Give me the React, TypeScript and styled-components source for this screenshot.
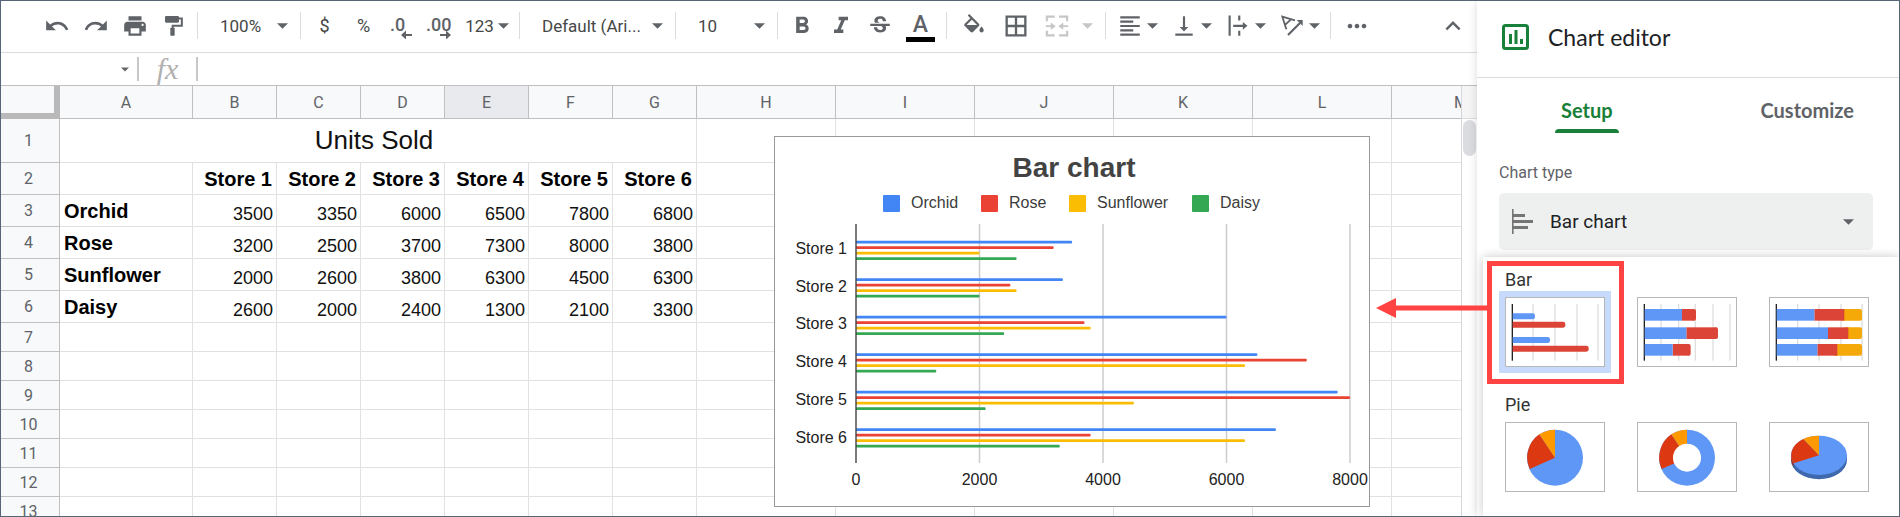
import React from 'react';
import styled, { createGlobalStyle, css } from 'styled-components';
import {
  MdUndo,
  MdRedo,
  MdPrint,
  MdFormatBold,
  MdFormatItalic,
  MdStrikethroughS,
  MdBorderAll,
  MdFormatAlignLeft,
  MdVerticalAlignBottom,
  MdMoreHoriz,
  MdKeyboardArrowUp,
} from 'react-icons/md';

const GlobalStyle = createGlobalStyle`
  *, *::before, *::after { box-sizing: border-box; }
  body { margin: 0; background: #fff; font-family: Roboto, sans-serif; color: #202124; }
  button, input, select { font: inherit; color: inherit; margin: 0; padding: 0; border: 0; background: none; outline: none; }
  button { cursor: pointer; }
  svg { display: block; flex: none; }
`;

const GREEN = '#188038';
const ICON = '#5f6368';
const SANS = '"Liberation Sans", Arial, sans-serif';

const Frame = styled.div`
  display: flex;
  height: 100vh;
  border: 1px solid #566676;
  overflow: hidden;
`;

const Workspace = styled.main`
  flex: 1;
  min-width: 0;
  display: flex;
  flex-direction: column;
`;

/* ---------- toolbar ---------- */

const Toolbar = styled.div`
  flex: none;
  display: flex;
  align-items: center;
  height: 52px;
  padding: 0 5px 2px 36px;
  border-bottom: 1px solid #dadce0;
  color: ${ICON};
  font-size: 17px;
`;

const ToolButton = styled.button<{ $width?: number; $muted?: boolean }>`
  flex: none;
  display: flex;
  align-items: center;
  justify-content: center;
  width: ${(p) => p.$width ?? 39}px;
  height: 36px;
  ${(p) => p.$muted && css`color: #c4c6c8;`}
`;

const TextTool = styled(ToolButton)`
  color: #444746;
  font-size: 18px;
`;

const MenuTool = styled(ToolButton)<{ $gap?: number }>`
  gap: ${(p) => p.$gap ?? 4}px;
`;

const FormatsTool = styled(MenuTool)`
  color: #444746;
  svg { color: ${ICON}; }
`;

const CollapseButton = styled(ToolButton)`
  margin-left: auto;
`;

const Divider = styled.span`
  flex: none;
  width: 1px;
  height: 27px;
  margin: 0 4px;
  background: #dadce0;
`;

const ToolSelect = styled.label<{ $width: number }>`
  flex: none;
  display: grid;
  grid-template-columns: 1fr auto;
  align-items: center;
  width: ${(p) => p.$width}px;
  height: 36px;
  padding: 0 8px 0 18px;
  color: #444746;

  select {
    appearance: none;
    min-width: 0;
    height: 36px;
  }
  svg { color: ${ICON}; }
`;

const ColorLetter = styled.span`
  display: flex;
  flex-direction: column;
  align-items: center;
  width: 29px;
  padding-top: 3px;
  font-size: 23px;
  font-weight: 500;
  line-height: 24px;
  border-bottom: 5px solid #000;
`;

const Caret = ({ size = 11 }: { size?: number }) => (
  <svg width={size} height={size} viewBox="0 0 10 10" aria-hidden="true">
    <path d="M0 3h10L5 8z" fill="currentColor" />
  </svg>
);

const PaintRoller = () => (
  <svg width="26" height="26" viewBox="483 39 78 78" aria-hidden="true">
    <rect x="495" y="48" width="42" height="20" rx="4" fill="currentColor" />
    <path d="M537 55.500h8.500V77H518V86" fill="none" stroke="currentColor" strokeWidth="6" />
    <rect x="511" y="83" width="13" height="24" rx="2" fill="currentColor" />
  </svg>
);

const Decimals = ({ more }: { more?: boolean }) => (
  <svg width="30" height="26" viewBox="0 0 30 26" aria-hidden="true">
    <text x={more ? 1 : 3} y="18" fontFamily="Roboto, sans-serif" fontWeight="500" fontSize="18" fill="currentColor">
      {more ? '.00' : '.0'}
    </text>
    {more ? (
      <path d="M15 21h6v-3.500l5 4.500-5 4.500V23h-6z" fill="currentColor" />
    ) : (
      <path d="M25 21h-6v-3.500l-5 4.500 5 4.500V23h6z" fill="currentColor" />
    )}
  </svg>
);

const PaintBucket = () => (
  <svg width="26" height="26" viewBox="0 -1 24 24" aria-hidden="true">
    <path
      fill="currentColor"
      d="M16.560 8.940L7.620 0 6.210 1.410l2.380 2.380-5.150 5.150c-.59.59-.59 1.540 0 2.120l5.500 5.500c.29.29.68.44 1.060.44s.77-.15 1.060-.44l5.500-5.500c.59-.58.59-1.530 0-2.120zM5.210 10L10 5.210 14.790 10H5.210zM19 11.500s-2 2.170-2 3.500c0 1.100.9 2 2 2s2-.9 2-2c0-1.330-2-3.500-2-3.500z"
    />
  </svg>
);

const MergeCells = () => (
  <svg width="26" height="26" viewBox="345 41 73 73" aria-hidden="true">
    <g fill="none" stroke="currentColor" strokeWidth="6">
      <path d="M353 64V51h22M387 51h23v13M353 91v13h22M387 104h23V91" />
      <path d="M350 78h16M413 78h-16" strokeWidth="5" />
    </g>
    <path d="M364 68l14 10-14 10zM399 68l-14 10 14 10z" fill="currentColor" />
  </svg>
);

const WrapText = () => (
  <svg width="26" height="26" viewBox="850 41 73 73" aria-hidden="true">
    <g fill="none" stroke="currentColor" strokeWidth="6">
      <path d="M863 48v57M890 48v14M890 91v14M873 77h30" />
    </g>
    <path d="M900 66l13 11-13 11z" fill="currentColor" />
  </svg>
);

const RotateText = () => (
  <svg width="26" height="26" viewBox="534 23 78 78" aria-hidden="true">
    <g fill="none" stroke="currentColor">
      <path d="M582 45L544 34L556 72M570 42L553 58" strokeWidth="5.500" />
      <path d="M561 89L597 53" strokeWidth="6.500" />
    </g>
    <path d="M605 44v18L587 44z" fill="currentColor" />
  </svg>
);

/* ---------- formula bar ---------- */

const FormulaBar = styled.div`
  flex: none;
  display: flex;
  align-items: center;
  height: 33px;
  border-bottom: 1px solid #c0c0c0;
  color: #666;
`;

const NameBox = styled.label`
  flex: none;
  display: flex;
  align-items: center;
  width: 136px;
  padding-right: 8px;

  input { flex: 1; min-width: 0; height: 28px; }
`;

const BarRule = styled.span`
  flex: none;
  width: 2px;
  height: 24px;
  background: #c8c8c8;
`;

const FxLabel = styled.label`
  flex: none;
  width: 57px;
  font: italic 30px/28px 'Liberation Serif', serif;
  color: #b0b0b0;
  text-align: center;
`;

const FormulaInput = styled.input`
  flex: 1;
  min-width: 0;
  height: 28px;
`;

/* ---------- sheet ---------- */

const SheetArea = styled.section`
  flex: 1;
  min-height: 0;
  display: flex;
`;

const SheetView = styled.div`
  position: relative;
  flex: 1;
  min-width: 0;
  overflow: hidden;
  border-right: 1px solid #d5d7da;
`;

const Grid = styled.table`
  table-layout: fixed;
  width: 1px;
  border-collapse: separate;
  border-spacing: 0;
`;

const HeadCell = styled.th<{ $active?: boolean }>`
  height: 33px;
  padding: 0;
  border-right: 1px solid #c0c0c0;
  border-bottom: 1px solid #c0c0c0;
  background: ${(p) => (p.$active ? '#e8eaed' : '#f8f9fa')};
  color: ${ICON};
  font-size: 16px;
  font-weight: 400;
`;

const CornerCell = styled(HeadCell)`
  border-right: 6px solid #b9b9b9;
  border-bottom: 6px solid #b9b9b9;
`;

const RowHead = styled(HeadCell)`
  height: auto;
  padding-right: 3px;
`;

const Row = styled.tr<{ $height: number }>`
  height: ${(p) => p.$height}px;
`;

const Cell = styled.td`
  padding: 0 3px 0 4px;
  border-right: 1px solid #e1e1e1;
  border-bottom: 1px solid #e1e1e1;
  vertical-align: bottom;
  font: 18px/24px ${SANS};
  color: #111;
  text-align: right;
  white-space: nowrap;
`;

const BoldCell = styled(Cell)<{ $align?: 'left' | 'right' }>`
  padding: 0 4px 3px;
  font-size: 20px;
  font-weight: 700;
  color: #000;
  text-align: ${(p) => p.$align ?? 'right'};
`;

const TitleCell = styled(Cell)`
  padding: 0 8px 6px 0;
  font-size: 26px;
  line-height: 32px;
  text-align: center;
`;

const Scrollbar = styled.div`
  flex: none;
  width: 15px;
`;

const ScrollHead = styled.div`
  height: 33px;
  background: #f5f5f5;
  border-bottom: 1px solid #dcdcdc;
`;

const ScrollThumb = styled.div`
  height: 36px;
  margin: 1px;
  border-radius: 7px;
  background: #dadce0;
`;

/* ---------- chart ---------- */

const ChartBox = styled.figure`
  position: absolute;
  left: 773px;
  top: 50px;
  width: 596px;
  height: 371px;
  margin: 0;
  background: #fff;
  border: 1px solid #999;
`;

const STORES = ['Store 1', 'Store 2', 'Store 3', 'Store 4', 'Store 5', 'Store 6'];

const SERIES = [
  { name: 'Orchid', color: '#4285f4', legendX: 108, values: [3500, 3350, 6000, 6500, 7800, 6800] },
  { name: 'Rose', color: '#ea4335', legendX: 206, values: [3200, 2500, 3700, 7300, 8000, 3800] },
  { name: 'Sunflower', color: '#fbbc04', legendX: 294, values: [2000, 2600, 3800, 6300, 4500, 6300] },
  { name: 'Daisy', color: '#34a853', legendX: 417, values: [2600, 2000, 2400, 1300, 2100, 3300] },
];

const TICKS = [0, 2000, 4000, 6000, 8000];
const AXIS_X = 81;
const xOf = (v: number) => AXIS_X + (v * 123.5) / 2000;

const BarChart = () => (
  <svg width="594" height="369" viewBox="0 0 594 369" fontFamily={SANS} fontSize="16" role="img" aria-label="Bar chart">
    <text x="299" y="40" textAnchor="middle" fontSize="28" fontWeight="700" fill="#434343">
      Bar chart
    </text>
    {SERIES.map((s) => (
      <g key={s.name}>
        <rect x={s.legendX} y="58" width="17" height="17" rx="1" fill={s.color} />
        <text x={s.legendX + 28} y="71" fill="#3c3c3c">
          {s.name}
        </text>
      </g>
    ))}
    {TICKS.map((t) => (
      <g key={t}>
        {t > 0 && <line x1={xOf(t)} x2={xOf(t)} y1="87" y2="326" stroke="#ccc" strokeWidth="1.500" />}
        <text x={xOf(t)} y="348" textAnchor="middle" fill="#222">
          {t}
        </text>
      </g>
    ))}
    {STORES.map((store, i) => (
      <g key={store}>
        <text x="72" y={117 + i * 37.700} textAnchor="end" fill="#222">
          {store}
        </text>
        {SERIES.map((s, j) => (
          <rect
            key={s.name}
            x={AXIS_X}
            y={103.700 + i * 37.500 + j * 5.500}
            width={xOf(s.values[i]) - AXIS_X}
            height="2.800"
            rx="1"
            fill={s.color}
          />
        ))}
      </g>
    ))}
    <line x1={AXIS_X} x2={AXIS_X} y1="87" y2="326" stroke="#333" strokeWidth="1.300" />
  </svg>
);

/* ---------- side panel ---------- */

const Panel = styled.aside`
  position: relative;
  z-index: 1;
  flex: none;
  display: flex;
  flex-direction: column;
  width: 422px;
  background: #fff;
  box-shadow: 0 0 9px rgba(0, 0, 0, 0.15);
`;

const PanelHeader = styled.header`
  flex: none;
  display: flex;
  align-items: center;
  gap: 19px;
  height: 77px;
  padding: 0 25px 4px;
  border-bottom: 1px solid #dadce0;
  color: ${GREEN};
`;

const PanelTitle = styled.h1`
  margin: 0;
  font: 400 23px/28px Lato, sans-serif;
  color: #202124;
`;

const Tabs = styled.div`
  flex: none;
  display: flex;
  justify-content: space-between;
  height: 55px;
  padding: 0 39px 0 78px;
`;

const Tab = styled.button<{ $selected?: boolean }>`
  padding: 20px 6px 0;
  font: 700 20px/24px Lato, sans-serif;
  color: ${(p) => (p.$selected ? GREEN : ICON)};
  display: flex;
  flex-direction: column;
  justify-content: space-between;
  align-items: center;

  &::after {
    content: '';
    width: calc(100% + 12px);
    height: 4px;
    border-radius: 4px 4px 0 0;
    background: ${(p) => (p.$selected ? GREEN : 'transparent')};
  }
`;

const Field = styled.div`
  flex: none;
  display: flex;
  flex-direction: column;
  gap: 8px;
  padding: 28px 26px 7px 22px;
`;

const FieldLabel = styled.label`
  font-size: 16px;
  line-height: 24px;
  color: ${ICON};
`;

const SelectShell = styled.div`
  display: grid;
  grid-template-columns: auto 1fr auto;
  align-items: center;
  gap: 17px;
  height: 57px;
  padding: 0 19px 0 13px;
  border-radius: 5px;
  background: #eef0f0;
  color: ${ICON};

  select {
    appearance: none;
    height: 57px;
    font-size: 19px;
    color: #202124;
  }
`;

const TypeMenu = styled.div`
  position: relative;
  flex: 1;
  min-height: 0;
  margin-left: 6px;
  padding: 11px 0 0 22px;
  background: #fff;
  box-shadow: 0 0 10px rgba(0, 0, 0, 0.22);
`;

const TypeGroup = styled.section`
  height: 125px;
`;

const GroupTitle = styled.h2`
  margin: 0 0 5px;
  font-size: 18px;
  font-weight: 400;
  line-height: 24px;
  color: #333;
`;

const Tiles = styled.div`
  display: flex;
  gap: 32px;
`;

const Tile = styled.button<{ $selected?: boolean }>`
  width: 100px;
  height: 70px;
  border: 1px solid #b7b7b7;
  background: #fff;
  ${(p) => p.$selected && css`box-shadow: 0 0 0 6px #c6dafc;`}
`;

const Highlight = styled.div`
  position: absolute;
  left: 4px;
  top: 4px;
  width: 137px;
  height: 123px;
  border: 5px solid #ff4343;
  pointer-events: none;

  svg {
    position: absolute;
    right: 100%;
    top: 32px;
    margin-right: 5px;
  }
`;

const BLUE = '#5e97f6';
const RED = '#db4437';
const AMBER = '#f4a908';

const Thumb = ({ children }: { children: React.ReactNode }) => (
  <svg width="98" height="68" viewBox="0 0 294 204" aria-hidden="true">
    {children}
  </svg>
);

const ThumbGrid = ({ lines }: { lines: number[] }) => (
  <g>
    {lines.map((x) => (
      <rect key={x} x={x - 2} y="18" width="4" height="170" fill="#dedede" />
    ))}
    <rect x="17" y="18" width="4" height="170" fill="#222" />
  </g>
);

const ClusterThumb = () => (
  <Thumb>
    <ThumbGrid lines={[81, 147, 213, 276]} />
    {[
      [46, 87, BLUE],
      [71, 178, RED],
      [117, 132, BLUE],
      [143, 248, RED],
    ].map(([y, end, fill]) => (
      <path
        key={y}
        d={`M20 ${y}H${Number(end) - 7}q7 0 7 7v4q0 7 -7 7H20z`}
        fill={String(fill)}
      />
    ))}
  </Thumb>
);

const StackThumb = ({ lines, rows }: { lines: number[]; rows: number[][] }) => (
  <Thumb>
    <ThumbGrid lines={lines} />
    {rows.map(([y, a, b, c]) => (
      <g key={y}>
        <rect x={b - 12} y={y} width={(c ?? b) - b + 12} height="35" rx="6" fill={c ? AMBER : RED} />
        <rect x={a} y={y} width={b - a - (c ? 0 : 6)} height="35" fill={RED} />
        <rect x="20" y={y} width={a - 20} height="35" fill={BLUE} />
      </g>
    ))}
  </Thumb>
);

const PieSlices = () => (
  <g>
    <circle cx="147" cy="104" r="84" fill="#5e97f6" />
    <path d="M147 104L71 138A84 84 0 0 1 100 34z" fill="#dc3912" />
    <path d="M147 104L100 34A84 84 0 0 1 147 20z" fill="#ff9900" />
  </g>
);

/* ---------- page ---------- */

const NARROW = ['B', 'C', 'D', 'E', 'F', 'G'];
const WIDE = ['H', 'I', 'J', 'K', 'L', 'M'];
const EMPTY_ROWS = [7, 8, 9, 10, 11, 12, 13];

export default function App() {
  return (
    <>
      <GlobalStyle />
      <Frame>
        <Workspace>
          <Toolbar role="toolbar" aria-label="Formatting">
            <ToolButton aria-label="Undo"><MdUndo size={26} /></ToolButton>
            <ToolButton aria-label="Redo"><MdRedo size={26} /></ToolButton>
            <ToolButton aria-label="Print"><MdPrint size={26} /></ToolButton>
            <ToolButton aria-label="Paint format"><PaintRoller /></ToolButton>
            <Divider />
            <ToolSelect $width={94}>
              <select aria-label="Zoom"><option>100%</option></select>
              <Caret />
            </ToolSelect>
            <Divider />
            <TextTool aria-label="Currency">$</TextTool>
            <TextTool aria-label="Percent">%</TextTool>
            <ToolButton $width={38} aria-label="Decrease decimals"><Decimals /></ToolButton>
            <ToolButton $width={38} aria-label="Increase decimals"><Decimals more /></ToolButton>
            <FormatsTool $width={56} aria-label="More formats">123<Caret /></FormatsTool>
            <Divider />
            <ToolSelect $width={147}>
              <select aria-label="Font"><option>Default (Ari...</option></select>
              <Caret />
            </ToolSelect>
            <Divider />
            <ToolSelect $width={93}>
              <select aria-label="Font size"><option>10</option></select>
              <Caret />
            </ToolSelect>
            <Divider />
            <ToolButton aria-label="Bold"><MdFormatBold size={28} /></ToolButton>
            <ToolButton aria-label="Italic"><MdFormatItalic size={28} /></ToolButton>
            <ToolButton aria-label="Strikethrough"><MdStrikethroughS size={26} /></ToolButton>
            <ToolButton $width={43} aria-label="Text color"><ColorLetter>A</ColorLetter></ToolButton>
            <Divider />
            <ToolButton $width={45} aria-label="Fill color"><PaintBucket /></ToolButton>
            <ToolButton aria-label="Borders"><MdBorderAll size={28} /></ToolButton>
            <MenuTool $width={66} $gap={12} $muted aria-label="Merge cells"><MergeCells /><Caret /></MenuTool>
            <Divider />
            <MenuTool $width={54} aria-label="Horizontal align"><MdFormatAlignLeft size={26} /><Caret /></MenuTool>
            <MenuTool $width={54} aria-label="Vertical align"><MdVerticalAlignBottom size={26} /><Caret /></MenuTool>
            <MenuTool $width={54} aria-label="Text wrapping"><WrapText /><Caret /></MenuTool>
            <MenuTool $width={54} aria-label="Text rotation"><RotateText /><Caret /></MenuTool>
            <Divider />
            <ToolButton $width={43} aria-label="More"><MdMoreHoriz size={28} /></ToolButton>
            <CollapseButton aria-label="Hide the menus"><MdKeyboardArrowUp size={30} /></CollapseButton>
          </Toolbar>

          <FormulaBar>
            <NameBox>
              <input aria-label="Name box" />
              <Caret size={8} />
            </NameBox>
            <BarRule />
            <FxLabel htmlFor="formula">fx</FxLabel>
            <BarRule />
            <FormulaInput id="formula" />
          </FormulaBar>

          <SheetArea>
            <SheetView>
              <Grid>
                <colgroup>
                  <col style={{ width: 59 }} />
                  <col style={{ width: 133 }} />
                  {NARROW.map((c) => <col key={c} style={{ width: 84 }} />)}
                  {WIDE.map((c) => <col key={c} style={{ width: 139 }} />)}
                </colgroup>
                <thead>
                  <tr>
                    <CornerCell />
                    {['A', ...NARROW, ...WIDE].map((c) => (
                      <HeadCell key={c} scope="col" $active={c === 'E'}>{c}</HeadCell>
                    ))}
                  </tr>
                </thead>
                <tbody>
                  <Row $height={44}>
                    <RowHead scope="row">1</RowHead>
                    <TitleCell colSpan={7}>Units Sold</TitleCell>
                    {WIDE.map((c) => <Cell key={c} />)}
                  </Row>
                  <Row $height={32}>
                    <RowHead scope="row">2</RowHead>
                    <Cell />
                    {STORES.map((s) => <BoldCell key={s}>{s}</BoldCell>)}
                    {WIDE.map((c) => <Cell key={c} />)}
                  </Row>
                  {SERIES.map((s, i) => (
                    <Row key={s.name} $height={32}>
                      <RowHead scope="row">{i + 3}</RowHead>
                      <BoldCell $align="left">{s.name}</BoldCell>
                      {s.values.map((v, j) => <Cell key={STORES[j]}>{v}</Cell>)}
                      {WIDE.map((c) => <Cell key={c} />)}
                    </Row>
                  ))}
                  {EMPTY_ROWS.map((n) => (
                    <Row key={n} $height={29}>
                      <RowHead scope="row">{n}</RowHead>
                      <Cell />
                      {[...NARROW, ...WIDE].map((c) => <Cell key={c} />)}
                    </Row>
                  ))}
                </tbody>
              </Grid>
              <ChartBox><BarChart /></ChartBox>
            </SheetView>
            <Scrollbar>
              <ScrollHead />
              <ScrollThumb />
            </Scrollbar>
          </SheetArea>
        </Workspace>

        <Panel aria-label="Chart editor">
          <PanelHeader>
            <svg width="27" height="26" viewBox="0 0 27 26" aria-hidden="true">
              <rect x="1.500" y="1.500" width="24" height="23" rx="2" fill="none" stroke="currentColor" strokeWidth="3" />
              <path d="M7 10h3v10H7zM12.500 6h3v14h-3zM18 15h3v5h-3z" fill="currentColor" />
            </svg>
            <PanelTitle>Chart editor</PanelTitle>
          </PanelHeader>
          <Tabs role="tablist">
            <Tab role="tab" aria-selected="true" $selected>Setup</Tab>
            <Tab role="tab" aria-selected="false">Customize</Tab>
          </Tabs>
          <Field>
            <FieldLabel htmlFor="chart-type">Chart type</FieldLabel>
            <SelectShell>
              <svg width="21" height="25" viewBox="0 0 21 25" aria-hidden="true">
                <path d="M0 0h1.600v25H0zM1 5h12v3H1zM1 11h20v3H1zM1 17h15v3H1z" fill="#757575" />
              </svg>
              <select id="chart-type"><option>Bar chart</option></select>
              <Caret />
            </SelectShell>
          </Field>
          <TypeMenu>
            <TypeGroup>
              <GroupTitle>Bar</GroupTitle>
              <Tiles>
                <Tile $selected aria-label="Bar chart" aria-pressed="true"><ClusterThumb /></Tile>
                <Tile aria-label="Stacked bar chart">
                  <StackThumb
                    lines={[69, 122, 172, 225, 276]}
                    rows={[[33, 132, 174], [88, 145, 240], [138, 104, 158]]}
                  />
                </Tile>
                <Tile aria-label="100% stacked bar chart">
                  <StackThumb
                    lines={[83, 147, 213, 276]}
                    rows={[[33, 133, 223, 276], [88, 174, 235, 276], [138, 142, 202, 276]]}
                  />
                </Tile>
              </Tiles>
            </TypeGroup>
            <TypeGroup>
              <GroupTitle>Pie</GroupTitle>
              <Tiles>
                <Tile aria-label="Pie chart"><Thumb><PieSlices /></Thumb></Tile>
                <Tile aria-label="Doughnut chart">
                  <Thumb>
                    <PieSlices />
                    <circle cx="147" cy="104" r="42" fill="#fff" />
                  </Thumb>
                </Tile>
                <Tile aria-label="3D pie chart">
                  <Thumb>
                    <path d="M63 97v13A84 59 0 0 0 231 110V97z" fill="#4068ad" />
                    <path d="M63 97v13q2 14 8 20V97z" fill="#a52b0e" />
                    <g transform="translate(0 24.200) scale(1 .7)">
                      <PieSlices />
                    </g>
                  </Thumb>
                </Tile>
              </Tiles>
            </TypeGroup>
            <Highlight>
              <svg width="111" height="20" viewBox="0 0 111 20" aria-hidden="true">
                <path d="M0 10L20 0v7.500h91v5H20V20z" fill="#ff4343" />
              </svg>
            </Highlight>
          </TypeMenu>
        </Panel>
      </Frame>
    </>
  );
}
